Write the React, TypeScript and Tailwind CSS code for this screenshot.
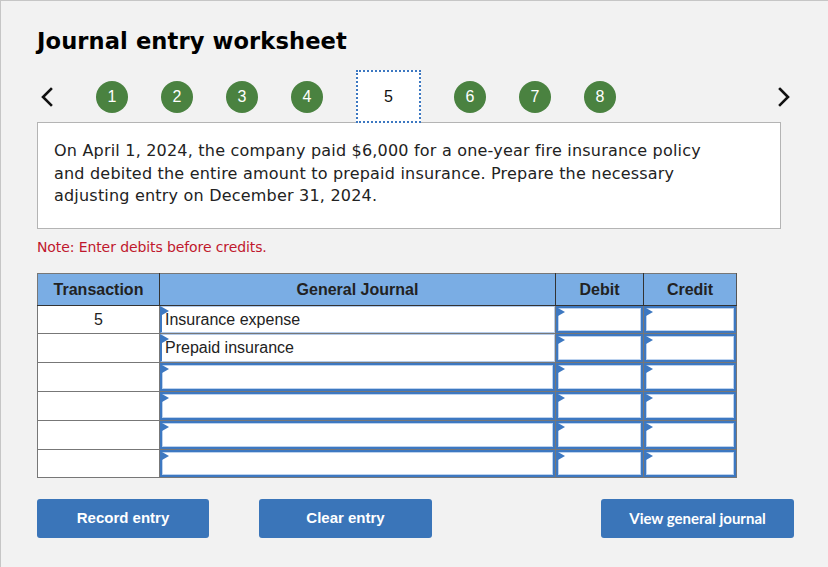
import React from 'react'

const rows = [
  { tx: '5', account: 'Insurance expense', h: 28 },
  { tx: '', account: 'Prepaid insurance', h: 29 },
  { tx: '', account: '', h: 29 },
  { tx: '', account: '', h: 29 },
  { tx: '', account: '', h: 29 },
  { tx: '', account: '', h: 28 },
]

function Flag() {
  return (
    <span className="absolute left-0 top-0 w-0 h-0 border-y-[4px] border-y-transparent border-l-[7px] border-l-[#3d78c1]" />
  )
}

function InputCell({ text, thin, h }: { text?: string; thin?: boolean; h: number }) {
  return (
    <div
      style={{ height: h - 1 }}
      className={`relative bg-white ${
        thin
          ? 'border-l-2 border-l-[#3d78c1] border-y border-r border-y-[#b3cbea] border-r-[#b3cbea]'
          : 'border-2 border-[#3d78c1] shadow-[inset_0_0_0_1px_#bcd2ee]'
      }`}
    >
      <Flag />
      {text && <span className="block pl-[3px] leading-[25px] text-[16px] text-[#222]">{text}</span>}
    </div>
  )
}

function Chevron({ dir }: { dir: 'left' | 'right' }) {
  return (
    <svg width="14" height="20" viewBox="0 0 14 20" fill="none" stroke="#111" strokeWidth="2.6" strokeLinecap="square">
      {dir === 'left' ? <polyline points="11,2 3,10 11,18" /> : <polyline points="3,2 11,10 3,18" />}
    </svg>
  )
}

export default function App() {
  const steps = [1, 2, 3, 4, 5, 6, 7, 8]
  return (
    <div className="w-[828px] h-[567px] bg-[#f2f2f2] border-l border-t border-[#c6c6c6] overflow-hidden">
      <div className="pl-[36px] pt-[26px]">
        <h1 className="text-[22.6px] leading-[28px] font-bold text-black font-['DejaVu_Sans',sans-serif] tracking-[0.1px]">
          Journal entry worksheet
        </h1>

        {/* Step nav */}
        <div className="flex items-center h-[51px] mt-[16px] w-[756px]">
          <div className="w-[59px] flex items-center pl-[3px]">
            <Chevron dir="left" />
          </div>
          <div className="flex items-center gap-[33px]">
            {steps.map(s =>
              s === 5 ? (
                <div
                  key={s}
                  className="relative z-10 self-start w-[65px] h-[53px] bg-white border-2 border-dotted border-[#3d78c1] flex items-center justify-center text-[16px] text-[#111] font-['Liberation_Sans',sans-serif]"
                >
                  5
                </div>
              ) : (
                <div
                  key={s}
                  className="w-[32px] h-[32px] rounded-full bg-[#4a8240] flex items-center justify-center text-white text-[16px] font-['Liberation_Sans',sans-serif]"
                >
                  {s}
                </div>
              )
            )}
          </div>
          <div className="ml-auto flex items-center pr-[2px]">
            <Chevron dir="right" />
          </div>
        </div>

        {/* Question */}
        <div className="w-[744px] h-[107px] bg-white border border-[#b4b4b4] px-4 pt-[17px] text-[16px] leading-[22.5px] tracking-[0.2px] text-[#222] font-['DejaVu_Sans',sans-serif]">
          On April 1, 2024, the company paid $6,000 for a one-year fire insurance policy
          <br />
          and debited the entire amount to prepaid insurance. Prepare the necessary
          <br />
          adjusting entry on December 31, 2024.
        </div>

        <p className="mt-[8px] text-[14px] leading-[20px] tracking-[-0.1px] text-[#c0182d] font-['DejaVu_Sans',sans-serif]">
          Note: Enter debits before credits.
        </p>

        {/* Journal table */}
        <table className="mt-[16px] border-collapse font-['Liberation_Sans',sans-serif] text-[16px] text-[#222]">
          <thead>
            <tr className="h-[32px] bg-[#7aade4]">
              <th className="w-[122px] border border-[#333] border-t-[#777] border-l-[#777] font-bold">Transaction</th>
              <th className="w-[396px] border border-[#333] border-t-[#777] font-bold">General Journal</th>
              <th className="w-[88px] border border-[#333] border-t-[#777] font-bold">Debit</th>
              <th className="w-[93px] border border-[#333] border-t-[#777] border-r-[#555] font-bold">Credit</th>
            </tr>
          </thead>
          <tbody>
            {rows.map((r, i) => (
              <tr key={i} style={{ height: r.h }}>
                <td className="border border-[#777] bg-white text-center p-0">{r.tx}</td>
                <td className="border border-[#777] p-0">
                  <InputCell text={r.account} thin={i < 2} h={r.h} />
                </td>
                <td className="border border-[#777] p-0">
                  <InputCell h={r.h} />
                </td>
                <td className="border border-[#777] p-0">
                  <InputCell h={r.h} />
                </td>
              </tr>
            ))}
          </tbody>
        </table>

        {/* Buttons */}
        <div className="mt-[21px] flex w-[757px]">
          <button className="w-[172px] h-[39px] rounded-[3px] bg-[#3a75b9] text-white text-[15px] font-bold font-['Liberation_Sans',sans-serif]">
            Record entry
          </button>
          <button className="ml-[50px] w-[173px] h-[39px] rounded-[3px] bg-[#3a75b9] text-white text-[15px] font-bold font-['Liberation_Sans',sans-serif]">
            Clear entry
          </button>
          <button className="ml-auto w-[193px] h-[39px] rounded-[3px] bg-[#3a75b9] text-white text-[15px] font-bold font-['Lato',sans-serif]">
            View general journal
          </button>
        </div>
      </div>
    </div>
  )
}
